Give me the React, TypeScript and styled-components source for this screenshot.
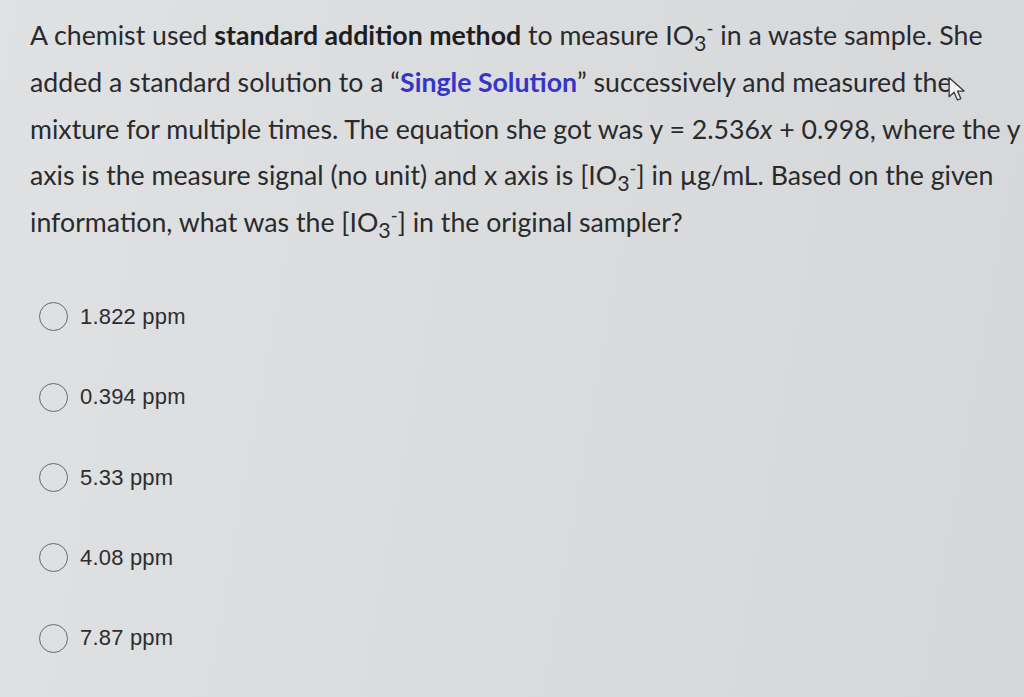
import React from "react";
import styled, { createGlobalStyle } from "styled-components";

const Global = createGlobalStyle`
  html, body { margin: 0; padding: 0; }
  body {
    width: 1024px;
    height: 697px;
    overflow: hidden;
    background: linear-gradient(100deg, #e0e1e3 0%, #dadcde 45%, #d5d7d9 100%);
  }
`;

const Page = styled.div`
  position: relative;
  width: 1024px;
  height: 697px;
  padding: 12px 0 0 30px;
  box-sizing: border-box;
  font-family: Lato, "Open Sans", sans-serif;
  color: #2a2a2c;
`;

const Question = styled.p`
  margin: 0;
  font-size: 26.7px;
  line-height: 46.8px;
  white-space: nowrap;
`;

const Strong = styled.b`
  font-weight: 700;
  color: #1e1e20;
`;

const Blue = styled.b`
  font-weight: 700;
  color: #3535c6;
`;

const Chem = styled.span`
  white-space: nowrap;
`;

const Sub = styled.sub`
  font-size: 0.8em;
  vertical-align: -0.3em;
  line-height: 0;
`;

const Sup = styled.sup`
  font-size: 0.7em;
  vertical-align: 0.55em;
  line-height: 0;
`;

const Options = styled.div`
  display: flex;
  flex-direction: column;
  gap: 50.3px;
  margin-top: 56px;
  padding-left: 9px;
`;

const Option = styled.label`
  display: flex;
  align-items: center;
  gap: 12px;
  height: 30px;
  font-family: "Liberation Sans", Arial, sans-serif;
  font-size: 22px;
  letter-spacing: 0.2px;
  color: #2d2d2f;
`;

const Radio = styled.span`
  width: 27px;
  height: 27px;
  border: 1.6px solid #69696b;
  border-radius: 50%;
  flex: none;
`;

const Cursor = styled.svg`
  position: absolute;
  left: 948px;
  top: 76px;
`;

const IO3 = () => (
  <Chem>
    IO<Sub>3</Sub>
    <Sup>-</Sup>
  </Chem>
);

const answers = ["1.822 ppm", "0.394 ppm", "5.33 ppm", "4.08 ppm", "7.87 ppm"];

export default function App() {
  return (
    <>
      <Global />
      <Page>
        <Question>
          A chemist used <Strong>standard addition method</Strong> to measure <IO3 /> in a waste sample. She
          <br />
          added a standard solution to a “<Blue>Single Solution</Blue>” successively and measured the
          <br />
          mixture for multiple times. The equation she got was y = 2.536<i>x</i> + 0.998, where the y
          <br />
          axis is the measure signal (no unit) and x axis is [<IO3 />] in µg/mL. Based on the given
          <br />
          information, what was the [<IO3 />] in the original sampler?
        </Question>
        <Options>
          {answers.map((a) => (
            <Option key={a}>
              <Radio />
              {a}
            </Option>
          ))}
        </Options>
        <Cursor width="20" height="28" viewBox="0 0 18 24">
          <path
            d="M1 1 L1 18 L5.5 14 L8.5 21 L11.5 19.7 L8.6 13 L14.5 13 Z"
            fill="#f4f4f4"
            stroke="#3a3a3a"
            strokeWidth="1.2"
            strokeLinejoin="round"
          />
        </Cursor>
      </Page>
    </>
  );
}
